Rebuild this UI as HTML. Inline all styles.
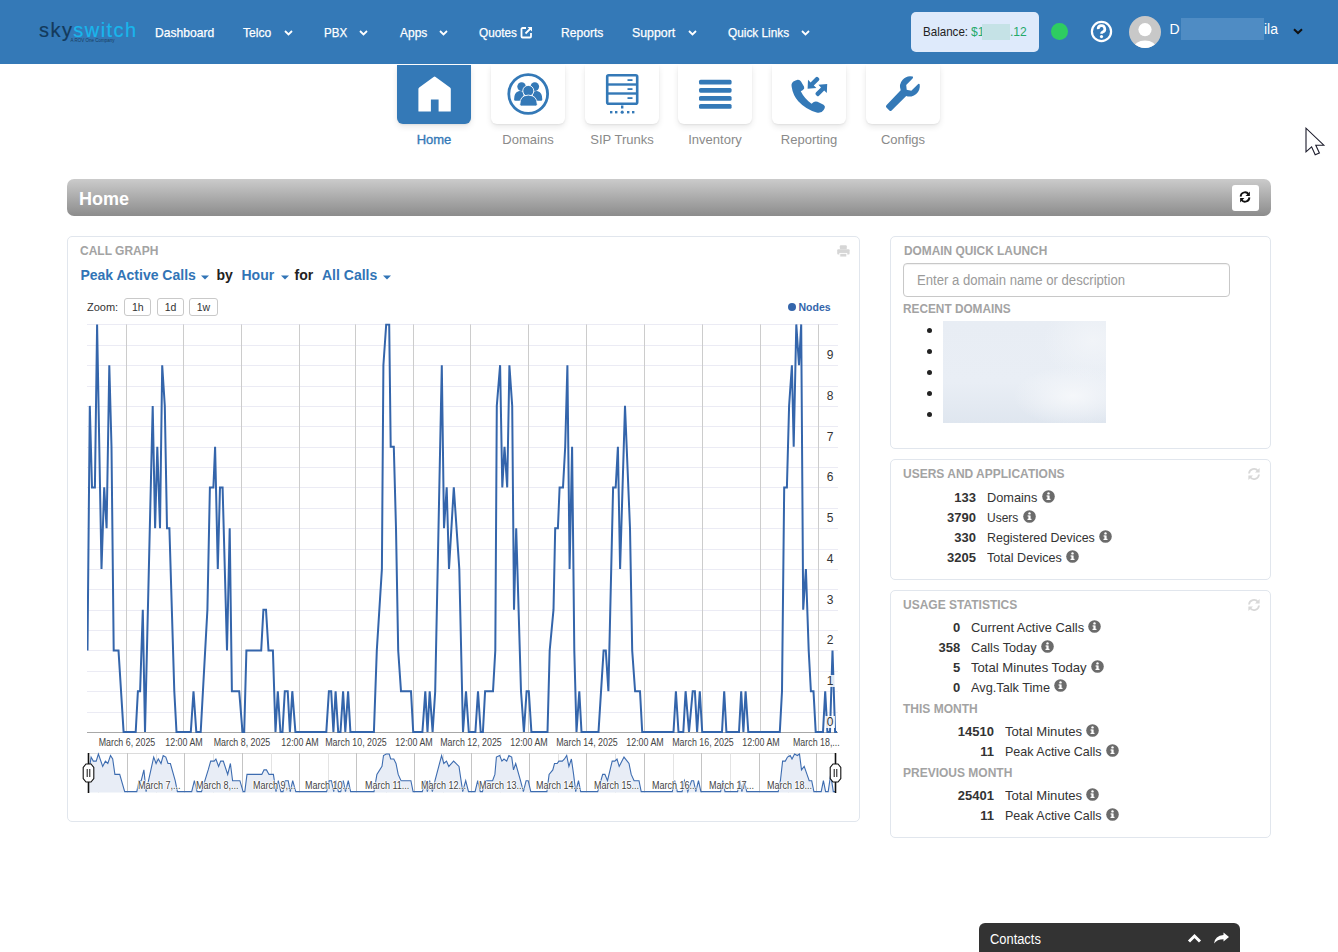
<!DOCTYPE html><html><head><meta charset="utf-8"><style>
*{box-sizing:border-box;margin:0;padding:0}
html,body{width:1338px;height:952px;overflow:hidden;background:#fff;font-family:"Liberation Sans",sans-serif}
body{position:relative}
.a{position:absolute;white-space:nowrap}
svg{position:absolute;overflow:visible}
</style></head><body><div class="a" style="left:0;top:0;width:1338px;height:64px;background:#3479b7"></div>
<div class="a" style="left:39px;top:18.2px;font-size:20px;line-height:24px;letter-spacing:1.45px;font-weight:normal;-webkit-text-stroke:0.2px"><span style="color:#133a5c;-webkit-text-stroke-color:#133a5c">sky</span><span style="color:#19b6ec;-webkit-text-stroke-color:#19b6ec">switch</span></div>
<div class="a" style="left:70.5px;top:37.6px;font-size:4.5px;line-height:6px;color:#1a3d60">A ROV One Company</div>
<div class="a" style="left:155.3px;top:26.00px;font-size:13px;line-height:13px;transform:scaleX(0.93);transform-origin:0 0;color:#fff;-webkit-text-stroke:0.25px #fff">Dashboard</div>
<div class="a" style="left:243.3px;top:26.00px;font-size:13px;line-height:13px;transform:scaleX(0.93);transform-origin:0 0;color:#fff;-webkit-text-stroke:0.25px #fff">Telco</div>
<svg style="left:284px;top:30px" width="9" height="6" viewBox="0 0 9 6"><polyline points="1,1 4.5,4.5 8,1" fill="none" stroke="#fff" stroke-width="1.8"/></svg>
<div class="a" style="left:323.8px;top:26.00px;font-size:13px;line-height:13px;transform:scaleX(0.89);transform-origin:0 0;color:#fff;-webkit-text-stroke:0.25px #fff">PBX</div>
<svg style="left:359px;top:30px" width="9" height="6" viewBox="0 0 9 6"><polyline points="1,1 4.5,4.5 8,1" fill="none" stroke="#fff" stroke-width="1.8"/></svg>
<div class="a" style="left:399.8px;top:26.00px;font-size:13px;line-height:13px;transform:scaleX(0.92);transform-origin:0 0;color:#fff;-webkit-text-stroke:0.25px #fff">Apps</div>
<svg style="left:439px;top:30px" width="9" height="6" viewBox="0 0 9 6"><polyline points="1,1 4.5,4.5 8,1" fill="none" stroke="#fff" stroke-width="1.8"/></svg>
<div class="a" style="left:478.8px;top:26.00px;font-size:13px;line-height:13px;transform:scaleX(0.905);transform-origin:0 0;color:#fff;-webkit-text-stroke:0.25px #fff">Quotes</div>
<div class="a" style="left:560.8px;top:26.00px;font-size:13px;line-height:13px;transform:scaleX(0.93);transform-origin:0 0;color:#fff;-webkit-text-stroke:0.25px #fff">Reports</div>
<div class="a" style="left:632.3px;top:26.00px;font-size:13px;line-height:13px;transform:scaleX(0.95);transform-origin:0 0;color:#fff;-webkit-text-stroke:0.25px #fff">Support</div>
<svg style="left:687.5px;top:30px" width="9" height="6" viewBox="0 0 9 6"><polyline points="1,1 4.5,4.5 8,1" fill="none" stroke="#fff" stroke-width="1.8"/></svg>
<div class="a" style="left:727.8px;top:26.00px;font-size:13px;line-height:13px;transform:scaleX(0.91);transform-origin:0 0;color:#fff;-webkit-text-stroke:0.25px #fff">Quick Links</div>
<svg style="left:801px;top:30px" width="9" height="6" viewBox="0 0 9 6"><polyline points="1,1 4.5,4.5 8,1" fill="none" stroke="#fff" stroke-width="1.8"/></svg>
<svg style="left:520px;top:26px" width="13" height="13" viewBox="0 0 13 13"><path d="M6,2 H2.5 A1,1 0 0 0 1.5,3 V10.5 A1,1 0 0 0 2.5,11.5 H10 A1,1 0 0 0 11,10.5 V7" fill="none" stroke="#fff" stroke-width="1.8"/><path d="M7.5,1 H12 V5.5 Z" fill="#fff"/><line x1="5.5" y1="7.5" x2="11" y2="2" stroke="#fff" stroke-width="1.8"/></svg>
<div class="a" style="left:911px;top:12px;width:128px;height:40px;background:#deeafb;border-radius:5px"></div>
<div class="a" style="left:922.5px;top:25.30px;font-size:13px;line-height:13px;transform:scaleX(0.89);transform-origin:0 0;color:#222">Balance:</div>
<div class="a" style="left:971.2px;top:25.30px;font-size:13px;line-height:13px;transform:scaleX(0.93);transform-origin:0 0;color:#25a96a">$1</div>
<div class="a" style="left:982px;top:24px;width:28px;height:15.5px;background:#c5e2e6"></div>
<div class="a" style="left:1010px;top:25.30px;font-size:13px;line-height:13px;transform:scaleX(0.93);transform-origin:0 0;color:#25a96a">.12</div>
<div class="a" style="left:1051px;top:23px;width:16.5px;height:16.5px;border-radius:50%;background:#2ecc61"></div>
<svg style="left:1090px;top:20px" width="23" height="23" viewBox="0 0 23 23"><circle cx="11.5" cy="11.5" r="9.6" fill="none" stroke="#fff" stroke-width="2.2"/><path d="M8.2,9.2 A3.3,3.3 0 1 1 12.7,12 Q11.5,12.6 11.5,13.8" fill="none" stroke="#fff" stroke-width="2.7"/><circle cx="11.5" cy="16.6" r="1.6" fill="#fff"/></svg>
<svg style="left:1129px;top:16px" width="32" height="32" viewBox="0 0 32 32"><defs><clipPath id="av"><circle cx="16" cy="16" r="16"/></clipPath></defs><circle cx="16" cy="16" r="16" fill="#c8c8c8"/><g clip-path="url(#av)"><ellipse cx="16" cy="13.6" rx="6.6" ry="6.6" fill="#fff"/><ellipse cx="16" cy="32.5" rx="11.5" ry="8" fill="#fff"/></g></svg>
<div class="a" style="left:1169.5px;top:21px;font-size:14px;line-height:16px;color:#fff">D</div>
<div class="a" style="left:1181px;top:18px;width:83px;height:22px;background:#4f8cc4"></div>
<div class="a" style="left:1264px;top:21px;font-size:14px;line-height:16px;color:#fff">ila</div>
<svg style="left:1293px;top:28px" width="10" height="7" viewBox="0 0 10 7"><polyline points="1,1.2 5,5 9,1.2" fill="none" stroke="#111" stroke-width="2"/></svg>
<div class="a" style="left:397px;top:65px;width:74px;height:59px;background:#3479b7;border-radius:0 0 6px 6px;box-shadow:0 3px 6px rgba(0,0,0,.09),0 1px 2px rgba(0,0,0,.06)"></div>
<div class="a" style="left:387px;top:132px;width:94px;text-align:center;font-size:13px;line-height:16px;color:#3479b7;font-weight:normal;-webkit-text-stroke:0.35px #3479b7">Home</div>
<div class="a" style="left:491px;top:65px;width:74px;height:59px;background:#fff;border-radius:0 0 6px 6px;box-shadow:0 3px 6px rgba(0,0,0,.09),0 1px 2px rgba(0,0,0,.06)"></div>
<div class="a" style="left:481px;top:132px;width:94px;text-align:center;font-size:13px;line-height:16px;color:#8a8a8a;font-weight:normal">Domains</div>
<div class="a" style="left:585px;top:65px;width:74px;height:59px;background:#fff;border-radius:0 0 6px 6px;box-shadow:0 3px 6px rgba(0,0,0,.09),0 1px 2px rgba(0,0,0,.06)"></div>
<div class="a" style="left:575px;top:132px;width:94px;text-align:center;font-size:13px;line-height:16px;color:#8a8a8a;font-weight:normal">SIP Trunks</div>
<div class="a" style="left:678px;top:65px;width:74px;height:59px;background:#fff;border-radius:0 0 6px 6px;box-shadow:0 3px 6px rgba(0,0,0,.09),0 1px 2px rgba(0,0,0,.06)"></div>
<div class="a" style="left:668px;top:132px;width:94px;text-align:center;font-size:13px;line-height:16px;color:#8a8a8a;font-weight:normal">Inventory</div>
<div class="a" style="left:772px;top:65px;width:74px;height:59px;background:#fff;border-radius:0 0 6px 6px;box-shadow:0 3px 6px rgba(0,0,0,.09),0 1px 2px rgba(0,0,0,.06)"></div>
<div class="a" style="left:762px;top:132px;width:94px;text-align:center;font-size:13px;line-height:16px;color:#8a8a8a;font-weight:normal">Reporting</div>
<div class="a" style="left:866px;top:65px;width:74px;height:59px;background:#fff;border-radius:0 0 6px 6px;box-shadow:0 3px 6px rgba(0,0,0,.09),0 1px 2px rgba(0,0,0,.06)"></div>
<div class="a" style="left:856px;top:132px;width:94px;text-align:center;font-size:13px;line-height:16px;color:#8a8a8a;font-weight:normal">Configs</div>
<svg style="left:418px;top:76px" width="34" height="36" viewBox="0 0 34 36"><path d="M0.4,13 Q0.4,12 1.2,11.4 L15.6,0.9 Q16.6,0.3 17.6,0.9 L32,11.4 Q32.8,12 32.8,13 V35 Q32.8,35.6 32.2,35.6 H20.6 V23.6 H12.9 V35.6 H1 Q0.4,35.6 0.4,35 Z" fill="#fff"/></svg>
<svg style="left:504px;top:70px" width="48" height="48" viewBox="0 0 48 48"><circle cx="24.2" cy="24" r="19.4" fill="none" stroke="#3479b7" stroke-width="2.8"/><circle cx="17.6" cy="16.6" r="4.3" fill="#3479b7"/><circle cx="30.8" cy="16.6" r="4.3" fill="#3479b7"/><path d="M10.1,29.5 Q10,22.5 14.5,21.2 Q17,20.8 19.5,22 L19.5,30.8 H11.4 Q10.1,30.8 10.1,29.5 Z" fill="#3479b7"/><path d="M38.3,29.5 Q38.4,22.5 33.9,21.2 Q31.4,20.8 28.9,22 L28.9,30.8 H37 Q38.3,30.8 38.3,29.5 Z" fill="#3479b7"/><circle cx="24.3" cy="20.9" r="5.5" fill="#3479b7" stroke="#fff" stroke-width="0.9"/><path d="M15.8,34.5 Q15.8,25.3 24.3,25.1 Q33.2,25.3 33.3,34.5 Q33.3,36.1 31.7,36.1 H17.4 Q15.8,36.1 15.8,34.5 Z" fill="#3479b7" stroke="#fff" stroke-width="0.9"/></svg>
<svg style="left:606px;top:74px" width="33" height="40" viewBox="0 0 33 40"><rect x="1.2" y="1.2" width="30" height="28.5" rx="1.5" fill="none" stroke="#3479b7" stroke-width="2.6"/><line x1="1" y1="10.5" x2="32" y2="10.5" stroke="#3479b7" stroke-width="2.4"/><line x1="1" y1="19.5" x2="32" y2="19.5" stroke="#3479b7" stroke-width="2.4"/><rect x="21.5" y="5.2" width="5" height="1.8" fill="#3479b7"/><rect x="21.5" y="14.2" width="5" height="1.8" fill="#3479b7"/><rect x="21.5" y="23.2" width="5" height="1.8" fill="#3479b7"/><rect x="15" y="31.5" width="2.4" height="3" fill="#3479b7"/><rect x="4" y="37" width="2.4" height="2.4" fill="#3479b7"/><rect x="9" y="37" width="2.4" height="2.4" fill="#3479b7"/><circle cx="16.2" cy="38.2" r="1.6" fill="#3479b7"/><rect x="21" y="37" width="2.4" height="2.4" fill="#3479b7"/><rect x="26" y="37" width="2.4" height="2.4" fill="#3479b7"/></svg>
<svg style="left:699px;top:79px" width="33" height="31" viewBox="0 0 33 31"><rect x="0" y="0.8" width="32.6" height="4.8" rx="1.6" fill="#3479b7"/><rect x="0" y="8.9" width="32.6" height="4.8" rx="1.6" fill="#3479b7"/><rect x="0" y="17" width="32.6" height="4.8" rx="1.6" fill="#3479b7"/><rect x="0" y="25" width="32.6" height="4.8" rx="1.6" fill="#3479b7"/></svg>
<svg style="left:790px;top:75px" width="38" height="39" viewBox="0 0 38 39"><path transform="matrix(1.1,0,0,0.971,0,1.1)" d="M1.5,11 Q0.5,6.5 5,4.5 L7,3.8 Q9,3.6 10,5.6 L12.8,11 Q13.5,13 11.8,14.2 L9.8,15.6 Q13,23 19.6,28.6 L21.6,26.8 Q23,25.5 25,26.4 L30.5,29.5 Q32.3,30.8 31.6,32.8 L30.6,35 Q28.8,38.6 24.2,37.6 Q14.5,34.5 7.5,26 Q2.6,19.5 1.5,11 Z" fill="#3479b7"/><path transform="translate(1.4,0.2)" d="M16.2,13.6 L16.6,4.6 L19.2,7.2 L24.4,2 Q25.6,1 26.6,2 L27.6,3 Q28.5,4 27.5,5.2 L22.4,10.3 L25,12.9 Z" fill="#3479b7"/><path transform="translate(1,1.5)" d="M36.2,7.6 L35.8,16.6 L33.2,14 L28,19.2 Q26.8,20.2 25.8,19.2 L24.8,18.2 Q23.9,17.2 24.9,16 L30,10.9 L27.4,8.3 Z" fill="#3479b7"/></svg>
<svg style="left:880px;top:70px" width="48" height="48" viewBox="0 0 48 48"><path d="M20.7,20.2 A10.3,10.3 0 0 1 32.8,6.6 Q33.4,7.6 32.6,8.6 L26.2,15.1 L26.7,19.7 L31.3,20.7 L38.2,13.9 Q39.4,13.2 39.7,14.6 A10.3,10.3 0 0 1 26.2,26 L11.6,40.6 Q10.5,41.6 9.4,40.6 L6.4,37.6 Q5.4,36.5 6.4,35.3 Z" fill="#3479b7"/></svg>
<div class="a" style="left:67px;top:179px;width:1204px;height:37px;border-radius:7px;background:linear-gradient(#cbcbcb,#8c8c8c)"></div>
<div class="a" style="left:79px;top:188px;font-size:18px;line-height:22px;font-weight:bold;color:#fff">Home</div>
<div class="a" style="left:1231.5px;top:185px;width:27px;height:25.5px;background:#fff;border-radius:3px"></div>
<svg style="left:1239px;top:191px" width="12" height="12" viewBox="0 0 12 12"><path d="M1.6,5.6 A4.4,4.4 0 0 1 9.6,3.2" fill="none" stroke="#111" stroke-width="1.8"/><path d="M10.9,0.6 V4.9 H6.6 Z" fill="#111"/><path d="M10.4,6.4 A4.4,4.4 0 0 1 2.4,8.8" fill="none" stroke="#111" stroke-width="1.8"/><path d="M1.1,11.4 V7.1 H5.4 Z" fill="#111"/></svg>
<div class="a" style="left:67px;top:236px;width:793px;height:586px;border:1px solid #e1e6ed;border-radius:5px"></div>
<div class="a" style="left:890px;top:236px;width:381px;height:213px;border:1px solid #e1e6ed;border-radius:5px"></div>
<div class="a" style="left:890px;top:459px;width:381px;height:121px;border:1px solid #e1e6ed;border-radius:5px"></div>
<div class="a" style="left:890px;top:590px;width:381px;height:248px;border:1px solid #e1e6ed;border-radius:5px"></div>
<div class="a" style="left:80px;top:245.24px;font-size:12px;line-height:12px;font-weight:bold;color:#a3a3a3">CALL GRAPH</div>
<svg style="left:836.5px;top:245px" width="13" height="13" viewBox="0 0 13 13"><rect x="2.8" y="0.3" width="7" height="4" rx="1" fill="#d6d6d6"/><rect x="0.2" y="4.2" width="12.4" height="5.4" rx="1" fill="#d6d6d6"/><rect x="2.8" y="8.4" width="7" height="3.6" fill="#d6d6d6" stroke="#fff" stroke-width="0.9"/></svg>
<div class="a" style="left:80.4px;top:267.85px;font-size:14px;line-height:14px;font-weight:bold;color:#3174b6">Peak Active Calls</div>
<svg style="left:200.5px;top:274.5px" width="8" height="5" viewBox="0 0 8 5"><path d="M0,0.5 H8 L4,4.5 Z" fill="#3174b6"/></svg>
<div class="a" style="left:216.5px;top:267.85px;font-size:14px;line-height:14px;font-weight:bold;color:#222">by</div>
<div class="a" style="left:241.5px;top:267.85px;font-size:14px;line-height:14px;font-weight:bold;color:#3174b6">Hour</div>
<svg style="left:280.5px;top:274.5px" width="8" height="5" viewBox="0 0 8 5"><path d="M0,0.5 H8 L4,4.5 Z" fill="#3174b6"/></svg>
<div class="a" style="left:294.5px;top:267.85px;font-size:14px;line-height:14px;font-weight:bold;color:#222">for</div>
<div class="a" style="left:322px;top:267.85px;font-size:14px;line-height:14px;font-weight:bold;color:#3174b6">All Calls</div>
<svg style="left:383px;top:274.5px" width="8" height="5" viewBox="0 0 8 5"><path d="M0,0.5 H8 L4,4.5 Z" fill="#3174b6"/></svg>
<div class="a" style="left:87px;top:302.19px;font-size:11px;line-height:11px;color:#333">Zoom:</div>
<div class="a" style="left:124.3px;top:298px;width:27px;height:17.5px;border:1px solid #c9c9c9;border-radius:3px;font-size:10.5px;line-height:16px;text-align:center;color:#333">1h</div>
<div class="a" style="left:157px;top:298px;width:27px;height:17.5px;border:1px solid #c9c9c9;border-radius:3px;font-size:10.5px;line-height:16px;text-align:center;color:#333">1d</div>
<div class="a" style="left:189.2px;top:298px;width:28.5px;height:17.5px;border:1px solid #c9c9c9;border-radius:3px;font-size:10.5px;line-height:16px;text-align:center;color:#333">1w</div>
<div class="a" style="left:788px;top:303px;width:8px;height:8px;border-radius:50%;background:#3465ab"></div>
<div class="a" style="left:798.5px;top:302.41px;font-size:10.5px;line-height:10.5px;font-weight:bold;color:#3465ab">Nodes</div>
<svg style="left:0;top:0" width="1338" height="952" viewBox="0 0 1338 952"><line x1="87" y1="712.5" x2="838" y2="712.5" stroke="#ebebf4" stroke-width="1"/><line x1="87" y1="691.5" x2="838" y2="691.5" stroke="#ebebf4" stroke-width="1"/><line x1="87" y1="671.5" x2="838" y2="671.5" stroke="#ebebf4" stroke-width="1"/><line x1="87" y1="650.5" x2="838" y2="650.5" stroke="#ebebf4" stroke-width="1"/><line x1="87" y1="630.5" x2="838" y2="630.5" stroke="#ebebf4" stroke-width="1"/><line x1="87" y1="610.5" x2="838" y2="610.5" stroke="#ebebf4" stroke-width="1"/><line x1="87" y1="589.5" x2="838" y2="589.5" stroke="#ebebf4" stroke-width="1"/><line x1="87" y1="569.5" x2="838" y2="569.5" stroke="#ebebf4" stroke-width="1"/><line x1="87" y1="549.5" x2="838" y2="549.5" stroke="#ebebf4" stroke-width="1"/><line x1="87" y1="528.5" x2="838" y2="528.5" stroke="#ebebf4" stroke-width="1"/><line x1="87" y1="508.5" x2="838" y2="508.5" stroke="#ebebf4" stroke-width="1"/><line x1="87" y1="487.5" x2="838" y2="487.5" stroke="#ebebf4" stroke-width="1"/><line x1="87" y1="467.5" x2="838" y2="467.5" stroke="#ebebf4" stroke-width="1"/><line x1="87" y1="447.5" x2="838" y2="447.5" stroke="#ebebf4" stroke-width="1"/><line x1="87" y1="426.5" x2="838" y2="426.5" stroke="#ebebf4" stroke-width="1"/><line x1="87" y1="406.5" x2="838" y2="406.5" stroke="#ebebf4" stroke-width="1"/><line x1="87" y1="386.5" x2="838" y2="386.5" stroke="#ebebf4" stroke-width="1"/><line x1="87" y1="365.5" x2="838" y2="365.5" stroke="#ebebf4" stroke-width="1"/><line x1="87" y1="345.5" x2="838" y2="345.5" stroke="#ebebf4" stroke-width="1"/><line x1="87" y1="324.5" x2="838" y2="324.5" stroke="#ebebf4" stroke-width="1"/><line x1="126.5" y1="324.4" x2="126.5" y2="732.0" stroke="#cccccc" stroke-width="1"/><line x1="183.5" y1="324.4" x2="183.5" y2="732.0" stroke="#cccccc" stroke-width="1"/><line x1="241.5" y1="324.4" x2="241.5" y2="732.0" stroke="#cccccc" stroke-width="1"/><line x1="299.5" y1="324.4" x2="299.5" y2="732.0" stroke="#cccccc" stroke-width="1"/><line x1="355.5" y1="324.4" x2="355.5" y2="732.0" stroke="#cccccc" stroke-width="1"/><line x1="413.5" y1="324.4" x2="413.5" y2="732.0" stroke="#cccccc" stroke-width="1"/><line x1="470.5" y1="324.4" x2="470.5" y2="732.0" stroke="#cccccc" stroke-width="1"/><line x1="528.5" y1="324.4" x2="528.5" y2="732.0" stroke="#cccccc" stroke-width="1"/><line x1="586.5" y1="324.4" x2="586.5" y2="732.0" stroke="#cccccc" stroke-width="1"/><line x1="644.5" y1="324.4" x2="644.5" y2="732.0" stroke="#cccccc" stroke-width="1"/><line x1="702.5" y1="324.4" x2="702.5" y2="732.0" stroke="#cccccc" stroke-width="1"/><line x1="760.5" y1="324.4" x2="760.5" y2="732.0" stroke="#cccccc" stroke-width="1"/><line x1="818.5" y1="324.4" x2="818.5" y2="732.0" stroke="#cccccc" stroke-width="1"/><line x1="87" y1="732.5" x2="838" y2="732.5" stroke="#a8a8a8" stroke-width="1"/><defs><clipPath id="pc"><rect x="87" y="323.4" width="751" height="409.6"/></clipPath></defs><polyline clip-path="url(#pc)" points="87.5,650.5 89.8,405.9 92.0,487.4 94.9,487.4 97.1,324.4 101.5,569.0 104.2,487.4 106.6,528.2 109.3,365.2 111.5,446.7 113.7,650.5 118.5,650.5 123.6,732.0 135.7,732.0 137.9,691.2 140.1,691.2 142.8,609.7 145.0,732.0 152.7,405.9 155.1,528.2 157.3,446.7 160.0,528.2 162.2,365.2 164.8,405.9 167.0,528.2 169.4,528.2 174.3,691.2 176.5,732.0 190.8,732.0 193.5,691.2 196.3,732.0 200.7,732.0 207.4,609.7 209.9,487.4 213.4,487.4 215.1,446.7 217.8,569.0 220.0,487.4 222.6,487.4 227.0,650.5 229.7,528.2 231.9,691.2 239.2,691.2 242.5,732.0 244.2,732.0 246.4,650.5 261.2,650.5 263.4,609.7 266.0,609.7 268.5,650.5 272.9,650.5 275.5,732.0 277.8,691.2 280.4,732.0 282.5,732.0 284.8,691.2 287.7,691.2 289.9,732.0 292.3,691.2 295.4,732.0 326.3,732.0 328.9,691.2 331.2,691.2 333.4,732.0 335.6,691.2 338.2,732.0 340.5,732.0 343.1,691.2 345.3,732.0 348.1,691.2 350.4,732.0 373.9,732.0 376.8,650.5 381.9,569.0 383.4,365.2 386.2,324.4 389.2,324.4 390.7,446.7 393.8,446.7 396.0,528.2 398.2,650.5 401.0,691.2 411.0,691.2 413.2,732.0 422.4,732.0 425.3,691.2 427.5,732.0 429.7,691.2 432.6,732.0 435.2,691.2 441.8,365.2 444.0,528.2 446.7,487.4 449.0,569.0 453.8,487.4 459.3,569.0 463.0,732.0 466.0,691.2 468.8,732.0 475.4,732.0 478.0,691.2 480.7,732.0 482.9,732.0 485.1,691.2 493.0,691.2 495.3,650.5 496.8,405.9 500.1,365.2 502.3,487.4 504.5,446.7 507.2,487.4 509.4,365.2 512.2,405.9 514.0,609.7 516.2,528.2 521.0,691.2 523.9,732.0 526.6,691.2 528.8,691.2 531.4,732.0 547.5,732.0 549.7,650.5 553.5,609.7 555.2,528.2 557.9,528.2 559.6,487.4 563.0,487.4 565.2,446.7 567.4,365.2 569.6,569.0 572.1,446.7 574.3,650.5 576.5,732.0 579.3,691.2 581.5,732.0 598.5,732.0 603.6,650.5 605.8,650.5 608.4,691.2 613.1,487.4 615.7,487.4 617.9,446.7 620.1,569.0 625.0,405.9 630.0,528.2 632.2,650.5 635.1,691.2 640.0,691.2 642.2,732.0 673.5,732.0 675.9,691.2 678.5,732.0 683.3,732.0 685.6,691.2 689.0,732.0 692.7,691.2 694.9,691.2 697.1,732.0 699.8,691.2 702.2,732.0 722.0,732.0 724.2,691.2 726.4,732.0 739.0,732.0 741.2,691.2 743.4,732.0 745.6,691.2 748.3,732.0 779.8,732.0 782.0,691.2 784.2,487.4 786.9,487.4 789.1,405.9 791.9,365.2 793.7,446.7 796.3,324.4 799.0,365.2 801.2,324.4 803.2,609.7 805.9,569.0 808.7,650.5 810.9,691.2 813.5,691.2 815.7,732.0 823.0,732.0 825.2,691.2 827.4,732.0 830.0,732.0 832.5,650.5 835.1,732.0 837.0,732.0" fill="none" stroke="#3465ab" stroke-width="2" stroke-linejoin="miter" stroke-miterlimit="2"/><line x1="88" y1="753.5" x2="836" y2="753.5" stroke="#dcdcdc" stroke-width="1"/><line x1="98.5" y1="753.0" x2="98.5" y2="792.6" stroke="#e3e3e3" stroke-width="1"/><line x1="156.5" y1="753.0" x2="156.5" y2="792.6" stroke="#e3e3e3" stroke-width="1"/><line x1="213.5" y1="753.0" x2="213.5" y2="792.6" stroke="#e3e3e3" stroke-width="1"/><line x1="271.5" y1="753.0" x2="271.5" y2="792.6" stroke="#e3e3e3" stroke-width="1"/><line x1="328.5" y1="753.0" x2="328.5" y2="792.6" stroke="#e3e3e3" stroke-width="1"/><line x1="386.5" y1="753.0" x2="386.5" y2="792.6" stroke="#e3e3e3" stroke-width="1"/><line x1="443.5" y1="753.0" x2="443.5" y2="792.6" stroke="#e3e3e3" stroke-width="1"/><line x1="500.5" y1="753.0" x2="500.5" y2="792.6" stroke="#e3e3e3" stroke-width="1"/><line x1="558.5" y1="753.0" x2="558.5" y2="792.6" stroke="#e3e3e3" stroke-width="1"/><line x1="615.5" y1="753.0" x2="615.5" y2="792.6" stroke="#e3e3e3" stroke-width="1"/><line x1="673.5" y1="753.0" x2="673.5" y2="792.6" stroke="#e3e3e3" stroke-width="1"/><line x1="730.5" y1="753.0" x2="730.5" y2="792.6" stroke="#e3e3e3" stroke-width="1"/><line x1="788.5" y1="753.0" x2="788.5" y2="792.6" stroke="#e3e3e3" stroke-width="1"/><line x1="127.5" y1="753.0" x2="127.5" y2="792.6" stroke="#c4c4c4" stroke-width="1"/><line x1="184.5" y1="753.0" x2="184.5" y2="792.6" stroke="#c4c4c4" stroke-width="1"/><line x1="242.5" y1="753.0" x2="242.5" y2="792.6" stroke="#c4c4c4" stroke-width="1"/><line x1="299.5" y1="753.0" x2="299.5" y2="792.6" stroke="#c4c4c4" stroke-width="1"/><line x1="356.5" y1="753.0" x2="356.5" y2="792.6" stroke="#c4c4c4" stroke-width="1"/><line x1="414.5" y1="753.0" x2="414.5" y2="792.6" stroke="#c4c4c4" stroke-width="1"/><line x1="471.5" y1="753.0" x2="471.5" y2="792.6" stroke="#c4c4c4" stroke-width="1"/><line x1="529.5" y1="753.0" x2="529.5" y2="792.6" stroke="#c4c4c4" stroke-width="1"/><line x1="586.5" y1="753.0" x2="586.5" y2="792.6" stroke="#c4c4c4" stroke-width="1"/><line x1="644.5" y1="753.0" x2="644.5" y2="792.6" stroke="#c4c4c4" stroke-width="1"/><line x1="701.5" y1="753.0" x2="701.5" y2="792.6" stroke="#c4c4c4" stroke-width="1"/><line x1="759.5" y1="753.0" x2="759.5" y2="792.6" stroke="#c4c4c4" stroke-width="1"/><line x1="816.5" y1="753.0" x2="816.5" y2="792.6" stroke="#c4c4c4" stroke-width="1"/><polygon points="88.5,792.6 88.5,774.4 91.1,757.1 93.3,761.1 96.2,761.1 98.4,754.0 102.7,766.4 105.4,761.1 107.8,763.5 110.5,755.5 112.7,759.0 114.9,774.4 119.7,774.4 124.7,791.6 136.8,791.6 139.0,780.7 141.2,780.7 143.9,769.9 146.1,791.6 153.7,757.1 156.1,763.5 158.3,759.0 161.0,763.5 163.2,755.5 165.8,757.1 168.0,763.5 170.4,763.5 175.2,780.7 177.4,791.6 191.7,791.6 194.4,780.7 197.1,791.6 201.5,791.6 208.2,769.9 210.7,761.1 214.2,761.1 215.9,759.0 218.6,766.4 220.7,761.1 223.3,761.1 227.7,774.4 230.4,763.5 232.6,780.7 239.9,780.7 243.1,791.6 244.8,791.6 247.0,774.4 261.8,774.4 264.0,769.9 266.5,769.9 269.0,774.4 273.4,774.4 276.0,791.6 278.3,780.7 280.9,791.6 283.0,791.6 285.3,780.7 288.2,780.7 290.3,791.6 292.7,780.7 295.8,791.6 326.6,791.6 329.2,780.7 331.5,780.7 333.7,791.6 335.9,780.7 338.4,791.6 340.7,791.6 343.3,780.7 345.5,791.6 348.3,780.7 350.6,791.6 374.0,791.6 376.9,774.4 382.0,766.4 383.5,755.5 386.2,754.0 389.2,754.0 390.7,759.0 393.8,759.0 396.0,763.5 398.2,774.4 401.0,780.7 410.9,780.7 413.1,791.6 422.3,791.6 425.2,780.7 427.4,791.6 429.6,780.7 432.4,791.6 435.0,780.7 441.6,755.5 443.8,763.5 446.5,761.1 448.8,766.4 453.6,761.1 459.0,766.4 462.7,791.6 465.7,780.7 468.5,791.6 475.1,791.6 477.7,780.7 480.3,791.6 482.5,791.6 484.7,780.7 492.6,780.7 494.9,774.4 496.4,757.1 499.7,755.5 501.9,761.1 504.0,759.0 506.7,761.1 508.9,755.5 511.7,757.1 513.5,769.9 515.7,763.5 520.5,780.7 523.4,791.6 526.1,780.7 528.2,780.7 530.8,791.6 546.9,791.6 549.1,774.4 552.8,769.9 554.5,763.5 557.2,763.5 558.9,761.1 562.3,761.1 564.5,759.0 566.7,755.5 568.9,766.4 571.4,759.0 573.6,774.4 575.7,791.6 578.5,780.7 580.7,791.6 597.7,791.6 602.7,774.4 604.9,774.4 607.5,780.7 612.2,761.1 614.8,761.1 617.0,759.0 619.2,766.4 624.0,757.1 629.0,763.5 631.2,774.4 634.1,780.7 639.0,780.7 641.2,791.6 672.3,791.6 674.7,780.7 677.3,791.6 682.1,791.6 684.4,780.7 687.8,791.6 691.5,780.7 693.6,780.7 695.8,791.6 698.5,780.7 700.9,791.6 720.6,791.6 722.8,780.7 725.0,791.6 737.6,791.6 739.8,780.7 741.9,791.6 744.1,780.7 746.8,791.6 778.2,791.6 780.4,780.7 782.6,761.1 785.3,761.1 787.5,757.1 790.2,755.5 792.0,759.0 794.6,754.0 797.3,755.5 799.5,754.0 801.5,769.9 804.2,766.4 807.0,774.4 809.2,780.7 811.7,780.7 813.9,791.6 821.2,791.6 823.4,780.7 825.6,791.6 828.2,791.6 830.7,774.4 833.3,791.6 835.1,791.6 835.5,792.6" fill="#e8edf6"/><polyline points="88.5,774.4 91.1,757.1 93.3,761.1 96.2,761.1 98.4,754.0 102.7,766.4 105.4,761.1 107.8,763.5 110.5,755.5 112.7,759.0 114.9,774.4 119.7,774.4 124.7,791.6 136.8,791.6 139.0,780.7 141.2,780.7 143.9,769.9 146.1,791.6 153.7,757.1 156.1,763.5 158.3,759.0 161.0,763.5 163.2,755.5 165.8,757.1 168.0,763.5 170.4,763.5 175.2,780.7 177.4,791.6 191.7,791.6 194.4,780.7 197.1,791.6 201.5,791.6 208.2,769.9 210.7,761.1 214.2,761.1 215.9,759.0 218.6,766.4 220.7,761.1 223.3,761.1 227.7,774.4 230.4,763.5 232.6,780.7 239.9,780.7 243.1,791.6 244.8,791.6 247.0,774.4 261.8,774.4 264.0,769.9 266.5,769.9 269.0,774.4 273.4,774.4 276.0,791.6 278.3,780.7 280.9,791.6 283.0,791.6 285.3,780.7 288.2,780.7 290.3,791.6 292.7,780.7 295.8,791.6 326.6,791.6 329.2,780.7 331.5,780.7 333.7,791.6 335.9,780.7 338.4,791.6 340.7,791.6 343.3,780.7 345.5,791.6 348.3,780.7 350.6,791.6 374.0,791.6 376.9,774.4 382.0,766.4 383.5,755.5 386.2,754.0 389.2,754.0 390.7,759.0 393.8,759.0 396.0,763.5 398.2,774.4 401.0,780.7 410.9,780.7 413.1,791.6 422.3,791.6 425.2,780.7 427.4,791.6 429.6,780.7 432.4,791.6 435.0,780.7 441.6,755.5 443.8,763.5 446.5,761.1 448.8,766.4 453.6,761.1 459.0,766.4 462.7,791.6 465.7,780.7 468.5,791.6 475.1,791.6 477.7,780.7 480.3,791.6 482.5,791.6 484.7,780.7 492.6,780.7 494.9,774.4 496.4,757.1 499.7,755.5 501.9,761.1 504.0,759.0 506.7,761.1 508.9,755.5 511.7,757.1 513.5,769.9 515.7,763.5 520.5,780.7 523.4,791.6 526.1,780.7 528.2,780.7 530.8,791.6 546.9,791.6 549.1,774.4 552.8,769.9 554.5,763.5 557.2,763.5 558.9,761.1 562.3,761.1 564.5,759.0 566.7,755.5 568.9,766.4 571.4,759.0 573.6,774.4 575.7,791.6 578.5,780.7 580.7,791.6 597.7,791.6 602.7,774.4 604.9,774.4 607.5,780.7 612.2,761.1 614.8,761.1 617.0,759.0 619.2,766.4 624.0,757.1 629.0,763.5 631.2,774.4 634.1,780.7 639.0,780.7 641.2,791.6 672.3,791.6 674.7,780.7 677.3,791.6 682.1,791.6 684.4,780.7 687.8,791.6 691.5,780.7 693.6,780.7 695.8,791.6 698.5,780.7 700.9,791.6 720.6,791.6 722.8,780.7 725.0,791.6 737.6,791.6 739.8,780.7 741.9,791.6 744.1,780.7 746.8,791.6 778.2,791.6 780.4,780.7 782.6,761.1 785.3,761.1 787.5,757.1 790.2,755.5 792.0,759.0 794.6,754.0 797.3,755.5 799.5,754.0 801.5,769.9 804.2,766.4 807.0,774.4 809.2,780.7 811.7,780.7 813.9,791.6 821.2,791.6 823.4,780.7 825.6,791.6 828.2,791.6 830.7,774.4 833.3,791.6 835.1,791.6" fill="none" stroke="#3d6cb0" stroke-width="1.1"/><line x1="88.5" y1="753" x2="88.5" y2="793" stroke="#111" stroke-width="1.6"/><path d="M86.0,764 H91.0 L93.8,767.5 V778.5 L91.0,782 H86.0 L83.2,778.5 V767.5 Z" fill="#fff" stroke="#111" stroke-width="1.1"/><line x1="87.2" y1="769" x2="87.2" y2="777" stroke="#111" stroke-width="1"/><line x1="89.8" y1="769" x2="89.8" y2="777" stroke="#111" stroke-width="1"/><line x1="835.5" y1="753" x2="835.5" y2="793" stroke="#111" stroke-width="1.6"/><path d="M833.0,764 H838.0 L840.8,767.5 V778.5 L838.0,782 H833.0 L830.2,778.5 V767.5 Z" fill="#fff" stroke="#111" stroke-width="1.1"/><line x1="834.2" y1="769" x2="834.2" y2="777" stroke="#111" stroke-width="1"/><line x1="836.8" y1="769" x2="836.8" y2="777" stroke="#111" stroke-width="1"/></svg>
<div class="a" style="left:825px;top:715.84px;width:10px;text-align:center;font-size:12px;line-height:12px;color:#333;background:rgba(255,255,255,.85)">0</div>
<div class="a" style="left:825px;top:675.08px;width:10px;text-align:center;font-size:12px;line-height:12px;color:#333;background:rgba(255,255,255,.85)">1</div>
<div class="a" style="left:825px;top:634.32px;width:10px;text-align:center;font-size:12px;line-height:12px;color:#333;background:rgba(255,255,255,.85)">2</div>
<div class="a" style="left:825px;top:593.56px;width:10px;text-align:center;font-size:12px;line-height:12px;color:#333;background:rgba(255,255,255,.85)">3</div>
<div class="a" style="left:825px;top:552.80px;width:10px;text-align:center;font-size:12px;line-height:12px;color:#333;background:rgba(255,255,255,.85)">4</div>
<div class="a" style="left:825px;top:512.04px;width:10px;text-align:center;font-size:12px;line-height:12px;color:#333;background:rgba(255,255,255,.85)">5</div>
<div class="a" style="left:825px;top:471.28px;width:10px;text-align:center;font-size:12px;line-height:12px;color:#333;background:rgba(255,255,255,.85)">6</div>
<div class="a" style="left:825px;top:430.52px;width:10px;text-align:center;font-size:12px;line-height:12px;color:#333;background:rgba(255,255,255,.85)">7</div>
<div class="a" style="left:825px;top:389.76px;width:10px;text-align:center;font-size:12px;line-height:12px;color:#333;background:rgba(255,255,255,.85)">8</div>
<div class="a" style="left:825px;top:349.00px;width:10px;text-align:center;font-size:12px;line-height:12px;color:#333;background:rgba(255,255,255,.85)">9</div>
<div class="a" style="left:-23.5px;width:300px;text-align:center;top:737.74px;font-size:10px;line-height:10px;transform:scaleX(0.885);transform-origin:50% 0;color:#444">March 6, 2025</div>
<div class="a" style="left:33.5px;width:300px;text-align:center;top:737.74px;font-size:10px;line-height:10px;transform:scaleX(0.885);transform-origin:50% 0;color:#444">12:00 AM</div>
<div class="a" style="left:91.5px;width:300px;text-align:center;top:737.74px;font-size:10px;line-height:10px;transform:scaleX(0.885);transform-origin:50% 0;color:#444">March 8, 2025</div>
<div class="a" style="left:149.5px;width:300px;text-align:center;top:737.74px;font-size:10px;line-height:10px;transform:scaleX(0.885);transform-origin:50% 0;color:#444">12:00 AM</div>
<div class="a" style="left:205.5px;width:300px;text-align:center;top:737.74px;font-size:10px;line-height:10px;transform:scaleX(0.885);transform-origin:50% 0;color:#444">March 10, 2025</div>
<div class="a" style="left:263.5px;width:300px;text-align:center;top:737.74px;font-size:10px;line-height:10px;transform:scaleX(0.885);transform-origin:50% 0;color:#444">12:00 AM</div>
<div class="a" style="left:320.5px;width:300px;text-align:center;top:737.74px;font-size:10px;line-height:10px;transform:scaleX(0.885);transform-origin:50% 0;color:#444">March 12, 2025</div>
<div class="a" style="left:378.5px;width:300px;text-align:center;top:737.74px;font-size:10px;line-height:10px;transform:scaleX(0.885);transform-origin:50% 0;color:#444">12:00 AM</div>
<div class="a" style="left:436.5px;width:300px;text-align:center;top:737.74px;font-size:10px;line-height:10px;transform:scaleX(0.885);transform-origin:50% 0;color:#444">March 14, 2025</div>
<div class="a" style="left:494.5px;width:300px;text-align:center;top:737.74px;font-size:10px;line-height:10px;transform:scaleX(0.885);transform-origin:50% 0;color:#444">12:00 AM</div>
<div class="a" style="left:552.5px;width:300px;text-align:center;top:737.74px;font-size:10px;line-height:10px;transform:scaleX(0.885);transform-origin:50% 0;color:#444">March 16, 2025</div>
<div class="a" style="left:610.5px;width:300px;text-align:center;top:737.74px;font-size:10px;line-height:10px;transform:scaleX(0.885);transform-origin:50% 0;color:#444">12:00 AM</div>
<div class="a" style="left:793px;top:737.74px;font-size:10px;line-height:10px;transform:scaleX(0.885);transform-origin:0 0;color:#444">March 18,...</div>
<div class="a" style="left:138px;top:780.93px;font-size:10px;line-height:10px;transform:scaleX(0.9);transform-origin:0 0;color:#444;text-shadow:1px 0 1px #fff,-1px 0 1px #fff,0 1px 1px #fff,0 -1px 1px #fff,0 0 2px #fff">March 7,...</div>
<div class="a" style="left:195.5px;top:780.93px;font-size:10px;line-height:10px;transform:scaleX(0.9);transform-origin:0 0;color:#444;text-shadow:1px 0 1px #fff,-1px 0 1px #fff,0 1px 1px #fff,0 -1px 1px #fff,0 0 2px #fff">March 8,...</div>
<div class="a" style="left:253px;top:780.93px;font-size:10px;line-height:10px;transform:scaleX(0.9);transform-origin:0 0;color:#444;text-shadow:1px 0 1px #fff,-1px 0 1px #fff,0 1px 1px #fff,0 -1px 1px #fff,0 0 2px #fff">March 9,...</div>
<div class="a" style="left:305.4px;top:780.93px;font-size:10px;line-height:10px;transform:scaleX(0.9);transform-origin:0 0;color:#444;text-shadow:1px 0 1px #fff,-1px 0 1px #fff,0 1px 1px #fff,0 -1px 1px #fff,0 0 2px #fff">March 10...</div>
<div class="a" style="left:364.6px;top:780.93px;font-size:10px;line-height:10px;transform:scaleX(0.9);transform-origin:0 0;color:#444;text-shadow:1px 0 1px #fff,-1px 0 1px #fff,0 1px 1px #fff,0 -1px 1px #fff,0 0 2px #fff">March 11...</div>
<div class="a" style="left:421.3px;top:780.93px;font-size:10px;line-height:10px;transform:scaleX(0.9);transform-origin:0 0;color:#444;text-shadow:1px 0 1px #fff,-1px 0 1px #fff,0 1px 1px #fff,0 -1px 1px #fff,0 0 2px #fff">March 12...</div>
<div class="a" style="left:479.2px;top:780.93px;font-size:10px;line-height:10px;transform:scaleX(0.9);transform-origin:0 0;color:#444;text-shadow:1px 0 1px #fff,-1px 0 1px #fff,0 1px 1px #fff,0 -1px 1px #fff,0 0 2px #fff">March 13...</div>
<div class="a" style="left:536.4px;top:780.93px;font-size:10px;line-height:10px;transform:scaleX(0.9);transform-origin:0 0;color:#444;text-shadow:1px 0 1px #fff,-1px 0 1px #fff,0 1px 1px #fff,0 -1px 1px #fff,0 0 2px #fff">March 14...</div>
<div class="a" style="left:594.1px;top:780.93px;font-size:10px;line-height:10px;transform:scaleX(0.9);transform-origin:0 0;color:#444;text-shadow:1px 0 1px #fff,-1px 0 1px #fff,0 1px 1px #fff,0 -1px 1px #fff,0 0 2px #fff">March 15...</div>
<div class="a" style="left:651.6px;top:780.93px;font-size:10px;line-height:10px;transform:scaleX(0.9);transform-origin:0 0;color:#444;text-shadow:1px 0 1px #fff,-1px 0 1px #fff,0 1px 1px #fff,0 -1px 1px #fff,0 0 2px #fff">March 16...</div>
<div class="a" style="left:709.1px;top:780.93px;font-size:10px;line-height:10px;transform:scaleX(0.9);transform-origin:0 0;color:#444;text-shadow:1px 0 1px #fff,-1px 0 1px #fff,0 1px 1px #fff,0 -1px 1px #fff,0 0 2px #fff">March 17...</div>
<div class="a" style="left:766.6px;top:780.93px;font-size:10px;line-height:10px;transform:scaleX(0.9);transform-origin:0 0;color:#444;text-shadow:1px 0 1px #fff,-1px 0 1px #fff,0 1px 1px #fff,0 -1px 1px #fff,0 0 2px #fff">March 18...</div>
<div class="a" style="left:903.5px;top:244.84px;font-size:12px;line-height:12px;transform:scaleX(0.99);transform-origin:0 0;font-weight:bold;color:#a3a3a3">DOMAIN QUICK LAUNCH</div>
<div class="a" style="left:903px;top:263px;width:326.5px;height:33.5px;border:1px solid #c8c8c8;border-radius:4px;box-shadow:inset 0 1px 1px rgba(0,0,0,.06)"></div>
<div class="a" style="left:916.5px;top:273.45px;font-size:14px;line-height:14px;transform:scaleX(0.938);transform-origin:0 0;color:#9a9a9a">Enter a domain name or description</div>
<div class="a" style="left:902.5px;top:302.84px;font-size:12px;line-height:12px;transform:scaleX(0.985);transform-origin:0 0;font-weight:bold;color:#a3a3a3">RECENT DOMAINS</div>
<div class="a" style="left:926.5px;top:328.1px;width:5px;height:5px;border-radius:50%;background:#222"></div>
<div class="a" style="left:926.5px;top:349.1px;width:5px;height:5px;border-radius:50%;background:#222"></div>
<div class="a" style="left:926.5px;top:370.1px;width:5px;height:5px;border-radius:50%;background:#222"></div>
<div class="a" style="left:926.5px;top:391.1px;width:5px;height:5px;border-radius:50%;background:#222"></div>
<div class="a" style="left:926.5px;top:412.1px;width:5px;height:5px;border-radius:50%;background:#222"></div>
<div class="a" style="left:943px;top:321px;width:163px;height:102px;background:radial-gradient(ellipse 60px 30px at 130px 75px,#f5f7fa,rgba(245,247,250,0)),radial-gradient(ellipse 50px 40px at 150px 20px,#f1f4f8,rgba(241,244,248,0)),linear-gradient(180deg,#e8edf4 0%,#e9eef5 60%,#dfe6ef 100%)"></div>
<div class="a" style="left:903px;top:468.24px;font-size:12px;line-height:12px;font-weight:bold;color:#a3a3a3">USERS AND APPLICATIONS</div>
<svg style="left:1247px;top:466.5px" width="14" height="14" viewBox="0 0 14 14"><path d="M2,6.5 A5,5 0 0 1 11,4" fill="none" stroke="#d8d8d8" stroke-width="1.8"/><path d="M12.6,1 V5.6 H8 Z" fill="#d8d8d8"/><path d="M12,7.5 A5,5 0 0 1 3,10" fill="none" stroke="#d8d8d8" stroke-width="1.8"/><path d="M1.4,13 V8.4 H6 Z" fill="#d8d8d8"/></svg>
<div class="a" style="left:676px;width:300px;text-align:right;top:491.30px;font-size:13px;line-height:13px;font-weight:bold;color:#333">133</div>
<div class="a" style="left:987.3px;top:491.30px;font-size:13px;line-height:13px;transform:scaleX(0.981);transform-origin:0 0;color:#333">Domains</div>
<svg style="left:1041.5px;top:489.8px" width="13" height="13" viewBox="0 0 13 13"><circle cx="6.5" cy="6.5" r="6.3" fill="#6b6b6b"/><rect x="5.4" y="5.5" width="2.2" height="4.3" fill="#fff"/><rect x="4.5" y="8.8" width="4" height="1.2" fill="#fff"/><rect x="4.5" y="5.5" width="2" height="1" fill="#fff"/><circle cx="6.5" cy="3.4" r="1.2" fill="#fff"/></svg>
<div class="a" style="left:676px;width:300px;text-align:right;top:511.20px;font-size:13px;line-height:13px;font-weight:bold;color:#333">3790</div>
<div class="a" style="left:987.3px;top:511.20px;font-size:13px;line-height:13px;transform:scaleX(0.922);transform-origin:0 0;color:#333">Users</div>
<svg style="left:1022.5px;top:509.70000000000005px" width="13" height="13" viewBox="0 0 13 13"><circle cx="6.5" cy="6.5" r="6.3" fill="#6b6b6b"/><rect x="5.4" y="5.5" width="2.2" height="4.3" fill="#fff"/><rect x="4.5" y="8.8" width="4" height="1.2" fill="#fff"/><rect x="4.5" y="5.5" width="2" height="1" fill="#fff"/><circle cx="6.5" cy="3.4" r="1.2" fill="#fff"/></svg>
<div class="a" style="left:676px;width:300px;text-align:right;top:531.10px;font-size:13px;line-height:13px;font-weight:bold;color:#333">330</div>
<div class="a" style="left:987.3px;top:531.10px;font-size:13px;line-height:13px;transform:scaleX(0.956);transform-origin:0 0;color:#333">Registered Devices</div>
<svg style="left:1099.0px;top:529.6px" width="13" height="13" viewBox="0 0 13 13"><circle cx="6.5" cy="6.5" r="6.3" fill="#6b6b6b"/><rect x="5.4" y="5.5" width="2.2" height="4.3" fill="#fff"/><rect x="4.5" y="8.8" width="4" height="1.2" fill="#fff"/><rect x="4.5" y="5.5" width="2" height="1" fill="#fff"/><circle cx="6.5" cy="3.4" r="1.2" fill="#fff"/></svg>
<div class="a" style="left:676px;width:300px;text-align:right;top:551.00px;font-size:13px;line-height:13px;font-weight:bold;color:#333">3205</div>
<div class="a" style="left:987.3px;top:551.00px;font-size:13px;line-height:13px;transform:scaleX(0.968);transform-origin:0 0;color:#333">Total Devices</div>
<svg style="left:1066.0px;top:549.5px" width="13" height="13" viewBox="0 0 13 13"><circle cx="6.5" cy="6.5" r="6.3" fill="#6b6b6b"/><rect x="5.4" y="5.5" width="2.2" height="4.3" fill="#fff"/><rect x="4.5" y="8.8" width="4" height="1.2" fill="#fff"/><rect x="4.5" y="5.5" width="2" height="1" fill="#fff"/><circle cx="6.5" cy="3.4" r="1.2" fill="#fff"/></svg>
<div class="a" style="left:903px;top:598.94px;font-size:12px;line-height:12px;font-weight:bold;color:#a3a3a3">USAGE STATISTICS</div>
<svg style="left:1247px;top:597.5px" width="14" height="14" viewBox="0 0 14 14"><path d="M2,6.5 A5,5 0 0 1 11,4" fill="none" stroke="#d8d8d8" stroke-width="1.8"/><path d="M12.6,1 V5.6 H8 Z" fill="#d8d8d8"/><path d="M12,7.5 A5,5 0 0 1 3,10" fill="none" stroke="#d8d8d8" stroke-width="1.8"/><path d="M1.4,13 V8.4 H6 Z" fill="#d8d8d8"/></svg>
<div class="a" style="left:660.3px;width:300px;text-align:right;top:621.10px;font-size:13px;line-height:13px;font-weight:bold;color:#333">0</div>
<div class="a" style="left:971px;top:621.10px;font-size:13px;line-height:13px;transform:scaleX(0.991);transform-origin:0 0;color:#333">Current Active Calls</div>
<svg style="left:1088.0px;top:619.6px" width="13" height="13" viewBox="0 0 13 13"><circle cx="6.5" cy="6.5" r="6.3" fill="#6b6b6b"/><rect x="5.4" y="5.5" width="2.2" height="4.3" fill="#fff"/><rect x="4.5" y="8.8" width="4" height="1.2" fill="#fff"/><rect x="4.5" y="5.5" width="2" height="1" fill="#fff"/><circle cx="6.5" cy="3.4" r="1.2" fill="#fff"/></svg>
<div class="a" style="left:660.3px;width:300px;text-align:right;top:641.00px;font-size:13px;line-height:13px;font-weight:bold;color:#333">358</div>
<div class="a" style="left:971px;top:641.00px;font-size:13px;line-height:13px;transform:scaleX(0.98);transform-origin:0 0;color:#333">Calls Today</div>
<svg style="left:1040.5px;top:639.5px" width="13" height="13" viewBox="0 0 13 13"><circle cx="6.5" cy="6.5" r="6.3" fill="#6b6b6b"/><rect x="5.4" y="5.5" width="2.2" height="4.3" fill="#fff"/><rect x="4.5" y="8.8" width="4" height="1.2" fill="#fff"/><rect x="4.5" y="5.5" width="2" height="1" fill="#fff"/><circle cx="6.5" cy="3.4" r="1.2" fill="#fff"/></svg>
<div class="a" style="left:660.3px;width:300px;text-align:right;top:661.00px;font-size:13px;line-height:13px;font-weight:bold;color:#333">5</div>
<div class="a" style="left:971px;top:661.00px;font-size:13px;line-height:13px;transform:scaleX(1.008);transform-origin:0 0;color:#333">Total Minutes Today</div>
<svg style="left:1090.5px;top:659.5px" width="13" height="13" viewBox="0 0 13 13"><circle cx="6.5" cy="6.5" r="6.3" fill="#6b6b6b"/><rect x="5.4" y="5.5" width="2.2" height="4.3" fill="#fff"/><rect x="4.5" y="8.8" width="4" height="1.2" fill="#fff"/><rect x="4.5" y="5.5" width="2" height="1" fill="#fff"/><circle cx="6.5" cy="3.4" r="1.2" fill="#fff"/></svg>
<div class="a" style="left:660.3px;width:300px;text-align:right;top:680.90px;font-size:13px;line-height:13px;font-weight:bold;color:#333">0</div>
<div class="a" style="left:971px;top:680.90px;font-size:13px;line-height:13px;transform:scaleX(0.98);transform-origin:0 0;color:#333">Avg.Talk Time</div>
<svg style="left:1054.0px;top:679.4px" width="13" height="13" viewBox="0 0 13 13"><circle cx="6.5" cy="6.5" r="6.3" fill="#6b6b6b"/><rect x="5.4" y="5.5" width="2.2" height="4.3" fill="#fff"/><rect x="4.5" y="8.8" width="4" height="1.2" fill="#fff"/><rect x="4.5" y="5.5" width="2" height="1" fill="#fff"/><circle cx="6.5" cy="3.4" r="1.2" fill="#fff"/></svg>
<div class="a" style="left:903px;top:703.14px;font-size:12px;line-height:12px;font-weight:bold;color:#a3a3a3">THIS MONTH</div>
<div class="a" style="left:694px;width:300px;text-align:right;top:725.30px;font-size:13px;line-height:13px;font-weight:bold;color:#333">14510</div>
<div class="a" style="left:1005px;top:725.30px;font-size:13px;line-height:13px;transform:scaleX(1.007);transform-origin:0 0;color:#333">Total Minutes</div>
<svg style="left:1086.0px;top:723.8px" width="13" height="13" viewBox="0 0 13 13"><circle cx="6.5" cy="6.5" r="6.3" fill="#6b6b6b"/><rect x="5.4" y="5.5" width="2.2" height="4.3" fill="#fff"/><rect x="4.5" y="8.8" width="4" height="1.2" fill="#fff"/><rect x="4.5" y="5.5" width="2" height="1" fill="#fff"/><circle cx="6.5" cy="3.4" r="1.2" fill="#fff"/></svg>
<div class="a" style="left:694px;width:300px;text-align:right;top:745.20px;font-size:13px;line-height:13px;font-weight:bold;color:#333">11</div>
<div class="a" style="left:1005px;top:745.20px;font-size:13px;line-height:13px;transform:scaleX(0.962);transform-origin:0 0;color:#333">Peak Active Calls</div>
<svg style="left:1105.5px;top:743.7px" width="13" height="13" viewBox="0 0 13 13"><circle cx="6.5" cy="6.5" r="6.3" fill="#6b6b6b"/><rect x="5.4" y="5.5" width="2.2" height="4.3" fill="#fff"/><rect x="4.5" y="8.8" width="4" height="1.2" fill="#fff"/><rect x="4.5" y="5.5" width="2" height="1" fill="#fff"/><circle cx="6.5" cy="3.4" r="1.2" fill="#fff"/></svg>
<div class="a" style="left:903px;top:766.84px;font-size:12px;line-height:12px;font-weight:bold;color:#a3a3a3">PREVIOUS MONTH</div>
<div class="a" style="left:694px;width:300px;text-align:right;top:789.00px;font-size:13px;line-height:13px;font-weight:bold;color:#333">25401</div>
<div class="a" style="left:1005px;top:789.00px;font-size:13px;line-height:13px;transform:scaleX(1.007);transform-origin:0 0;color:#333">Total Minutes</div>
<svg style="left:1086.0px;top:787.5px" width="13" height="13" viewBox="0 0 13 13"><circle cx="6.5" cy="6.5" r="6.3" fill="#6b6b6b"/><rect x="5.4" y="5.5" width="2.2" height="4.3" fill="#fff"/><rect x="4.5" y="8.8" width="4" height="1.2" fill="#fff"/><rect x="4.5" y="5.5" width="2" height="1" fill="#fff"/><circle cx="6.5" cy="3.4" r="1.2" fill="#fff"/></svg>
<div class="a" style="left:694px;width:300px;text-align:right;top:809.00px;font-size:13px;line-height:13px;font-weight:bold;color:#333">11</div>
<div class="a" style="left:1005px;top:809.00px;font-size:13px;line-height:13px;transform:scaleX(0.962);transform-origin:0 0;color:#333">Peak Active Calls</div>
<svg style="left:1105.5px;top:807.5px" width="13" height="13" viewBox="0 0 13 13"><circle cx="6.5" cy="6.5" r="6.3" fill="#6b6b6b"/><rect x="5.4" y="5.5" width="2.2" height="4.3" fill="#fff"/><rect x="4.5" y="8.8" width="4" height="1.2" fill="#fff"/><rect x="4.5" y="5.5" width="2" height="1" fill="#fff"/><circle cx="6.5" cy="3.4" r="1.2" fill="#fff"/></svg>
<div class="a" style="left:979px;top:923px;width:261px;height:40px;background:#333;border-radius:6px 6px 0 0"></div>
<div class="a" style="left:990.3px;top:932.45px;font-size:14px;line-height:14px;transform:scaleX(0.92);transform-origin:0 0;color:#fff">Contacts</div>
<svg style="left:1187px;top:933px" width="15" height="11" viewBox="0 0 15 11"><polyline points="2,8.5 7.5,3 13,8.5" fill="none" stroke="#fff" stroke-width="3"/></svg>
<svg style="left:1213px;top:932px" width="17" height="13" viewBox="0 0 17 13"><path d="M16,5 L10.5,0.5 V3 Q2,3.5 1,11.5 Q4,7.2 10.5,7.2 V9.6 Z" fill="#fff"/></svg>
<svg style="left:1304px;top:127px" width="24" height="30" viewBox="0 0 24 30"><path d="M2,1.2 V24.8 L7.6,19.8 L11.2,27.8 L15.4,26 L11.8,18.2 L19.8,18.2 Z" fill="#fff" stroke="#1a1a2a" stroke-width="1.1" stroke-linejoin="miter"/></svg></body></html>
